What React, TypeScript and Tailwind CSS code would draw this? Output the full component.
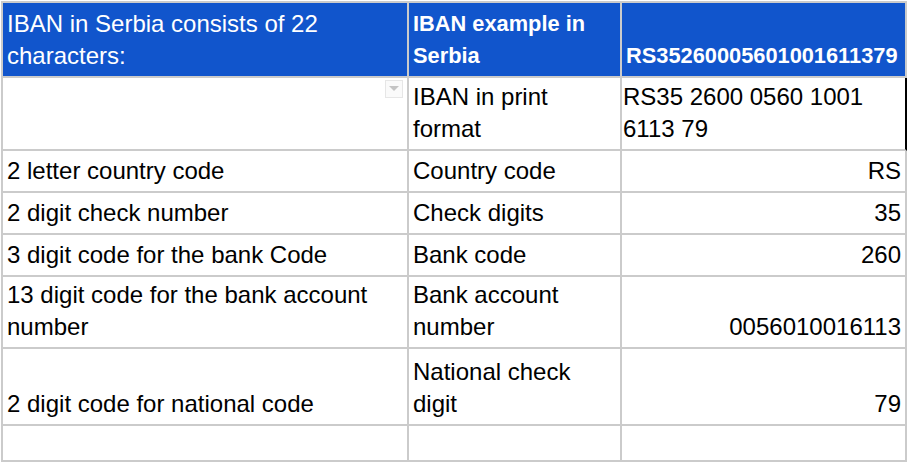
import React from "react"

type Cell = {
  text?: string
  align?: "left" | "right"
  bold?: boolean
}

type Row = {
  h: string
  header?: boolean
  cells: Cell[]
}

const rows: Row[] = [
  {
    h: "h-[75px]",
    header: true,
    cells: [
      { text: "IBAN in Serbia consists of 22 characters:" },
      { text: "IBAN example in Serbia", bold: true },
      { text: "RS35260005601001611379", bold: true },
    ],
  },
  {
    h: "h-[73px]",
    cells: [{}, { text: "IBAN in print format" }, { text: "RS35 2600 0560 1001 6113 79" }],
  },
  {
    h: "h-[42px]",
    cells: [{ text: "2 letter country code" }, { text: "Country code" }, { text: "RS", align: "right" }],
  },
  {
    h: "h-[42px]",
    cells: [{ text: "2 digit check number" }, { text: "Check digits" }, { text: "35", align: "right" }],
  },
  {
    h: "h-[42px]",
    cells: [
      { text: "3 digit code for the bank Code" },
      { text: "Bank code" },
      { text: "260", align: "right" },
    ],
  },
  {
    h: "h-[72px]",
    cells: [
      { text: "13 digit code for the bank account number" },
      { text: "Bank account number" },
      { text: "0056010016113", align: "right" },
    ],
  },
  {
    h: "h-[77px]",
    cells: [
      { text: "2 digit code for national code" },
      { text: "National check digit" },
      { text: "79", align: "right" },
    ],
  },
  { h: "h-[36px]", cells: [{}, {}, {}] },
]

const widths = ["w-[406px]", "w-[213px]", "w-[285px]"]

export default function App() {
  return (
    <div className="bg-white w-[909px] h-[463px] pt-[1px] pl-[1px] font-['Liberation_Sans',Arial,sans-serif]">
      <div className="w-[906px] border-l-2 border-t-2 border-[#cbcbcb]">
        {rows.map((row, ri) => (
          <div key={ri} className={`flex ${row.h}`}>
            {row.cells.map((c, ci) => {
              // the active cell in the sheet, black edge on its right
              const selected = ri === 1 && ci === 2
              return (
                <div
                  key={ci}
                  className={`relative ${widths[ci]} shrink-0 flex items-end border-b-2 border-r-2 border-[#cbcbcb] pb-[4px] leading-[32px] ${
                    selected ? "pl-[1px] pr-[4px] border-r-black" : "px-[4px]"
                  } ${row.header ? "bg-[#1155cc] text-white" : "bg-white text-black"} ${
                    c.align === "right" ? "justify-end text-right" : "justify-start"
                  } ${c.bold ? "font-bold text-[21.8px]" : "text-[24px]"}`}
                >
                  {c.text && <span className="block">{c.text}</span>}
                  {ri === 1 && ci === 0 && (
                    <div className="absolute right-[4px] top-[2px] w-[18px] h-[18px] border border-[#e6e6e6] bg-[#fafafa] flex items-center justify-center">
                      <svg width="10" height="6" viewBox="0 0 10 6">
                        <path d="M0 0 L10 0 L5 5 Z" fill="#c4c4c4" />
                      </svg>
                    </div>
                  )}
                </div>
              )
            })}
          </div>
        ))}
      </div>
    </div>
  )
}
